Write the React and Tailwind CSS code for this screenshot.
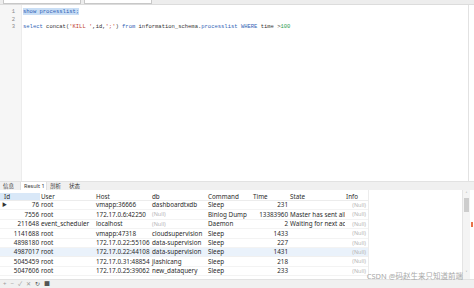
import React from "react";

const cols = [
  { key: "id", label: "Id", w: 40, right: true },
  { key: "user", label: "User", w: 55 },
  { key: "host", label: "Host", w: 56 },
  { key: "db", label: "db", w: 56 },
  { key: "cmd", label: "Command", w: 45 },
  { key: "time", label: "Time", w: 37, right: true },
  { key: "state", label: "State", w: 56 },
  { key: "info", label: "Info", w: 23 },
];

const rows = [
  ["76", "root", "vmapp:36666", "dashboardtxdb", "Sleep", "231", "", null],
  ["7556", "root", "172.17.0.6:42250", null, "Binlog Dump", "13383960", "Master has sent all b", null],
  ["211648", "event_scheduler", "localhost", null, "Daemon", "2", "Waiting for next acti", null],
  ["1141688", "root", "vmapp:47318", "cloudsupervision", "Sleep", "1433", "", null],
  ["4898180", "root", "172.17.0.22:55106", "data-supervision", "Sleep", "227", "", null],
  ["4987017", "root", "172.17.0.22:44108", "data-supervision", "Sleep", "1431", "", null],
  ["5045459", "root", "172.17.0.31:48854", "jiashicang", "Sleep", "218", "", null],
  ["5047606", "root", "172.17.0.25:39062", "new_dataquery", "Sleep", "233", "", null],
];

const ui = { fontFamily: '"Noto Sans", "Open Sans", "Noto Sans CJK SC", sans-serif' };
const mono = { fontFamily: '"Liberation Mono", "DejaVu Sans Mono", monospace' };

export default function App() {
  return (
    <div className="relative w-[474px] h-[288px] overflow-hidden bg-white flex flex-col" style={ui}>
      {/* top toolbar strip */}
      <div className="h-[5px] bg-[#ededed] border-b border-[#dcdcdc] flex items-end gap-[3px] px-[3px] shrink-0">
        <div className="w-[78px] h-[4px] bg-white border border-t-0 border-[#c8c8c8]" />
        <div className="w-[68px] h-[4px] bg-white border border-t-0 border-[#c8c8c8]" />
      </div>

      {/* editor */}
      <div className="flex h-[176px] shrink-0">
        <div className="w-[22px] bg-[#f6f6f6] border-r border-[#ececec] pt-[3px] text-[#8a8a8a] text-[5.5px] leading-[7.6px] text-right pr-[6px]" style={mono}>
          <div>1</div>
          <div>2</div>
          <div>3</div>
        </div>
        <div className="flex-1 pt-[3px] pl-[1px] text-[5.5px] leading-[7.6px] text-[#333]" style={mono}>
          <div>
            <span className="bg-[#c9def5] text-[#2f5fb5]">show processlist;</span>
          </div>
          <div>&nbsp;</div>
          <div className="whitespace-pre">
            <span className="text-[#2f5fb5]">select</span> concat(<span className="text-[#c0392b]">'KILL '</span>,id,<span className="text-[#c0392b]">';'</span>) <span className="text-[#2f5fb5]">from</span> information_schema.<span className="text-[#2f5fb5]">processlist</span> <span className="text-[#2f5fb5]">WHERE</span> time &gt;<span className="text-[#2e9e4f]">100</span>
          </div>
        </div>
        <div className="w-[6px] border-l border-[#e2e2e2] bg-white" />
      </div>

      {/* tab bar */}
      <div className="h-[9px] bg-[#f0f0f0] border-t border-[#e2e2e2] flex items-end text-[5.5px] text-[#333] shrink-0" style={ui}>
        <div className="w-[20px] pl-[3px] h-full flex items-center">信息</div>
        <div className="w-[27px] bg-white h-full flex items-center pl-[3px] border-x border-[#e0e0e0]">Result 1</div>
        <div className="w-[19px] h-full flex items-center pl-[3px]">剖析</div>
        <div className="w-[20px] h-full flex items-center pl-[3px]">状态</div>
      </div>

      {/* grid area */}
      <div className="flex h-[89px] shrink-0 bg-white">
        <div className="w-[368px] pt-[3px] text-[6.3px] text-[#2b2b2b]">
          <div className="flex h-[8px] items-center border-b border-[#ececec]">
            {cols.map((c, i) => (
              <div
                key={c.key}
                className={i === 0 ? "h-full flex items-center pl-[4px] bg-[#d9e8f8]" : "h-full flex items-center pl-[1px]"}
                style={{ width: c.w }}
              >
                {c.label}
              </div>
            ))}
          </div>
          {rows.map((r, ri) => (
            <div
              key={ri}
              className={ri === 5 ? "flex h-[9.4px] items-center bg-[#eaf2fb] border-b border-[#f0f0f0]" : "flex h-[9.4px] items-center border-b border-[#f3f3f3]"}
            >
              {r.map((v, ci) => {
                const c = cols[ci];
                const isNull = v === null;
                return (
                  <div
                    key={ci}
                    className={
                      "relative h-full flex items-center whitespace-nowrap overflow-hidden " +
                      (c.right ? "justify-end pr-[1px] " : "pl-[1px] ") +
                      (isNull ? "text-[#b4b4b4] text-[5.5px]" : "")
                    }
                    style={{ width: c.w }}
                  >
                    {ci === 0 && ri === 0 && (
                      <span className="absolute left-[2px] text-[5px] text-[#333]">▶</span>
                    )}
                    {isNull ? (ci === 7 ? <span className="ml-auto pr-[2px]">(Null)</span> : "(Null)") : v}
                  </div>
                );
              })}
            </div>
          ))}
        </div>
        <div className="flex-1 border-l border-[#ececec]" />
        <div className="w-[8px] bg-[#f4f4f4] border-l border-[#e4e4e4] flex flex-col items-center pt-[1px] text-[5px] text-[#777]">
          <div className="leading-[6px]">˄</div>
          <div className="w-[5px] h-[14px] bg-[#cdcdcd] mt-[1px]" />
          <div className="flex-1" />
          <div className="leading-[6px] mb-[3px]">˅</div>
        </div>
        <div className="w-[4px] relative">
          <div className="absolute top-[32px] left-[1px] w-[2px] h-[5px] bg-[#e8734a]" />
        </div>
      </div>

      {/* bottom toolbar */}
      <div className="h-[9px] bg-[#f0f0f0] border-t border-[#e2e2e2] flex items-center gap-[4px] pl-[3px] text-[6px] text-[#9a9a9a] shrink-0" style={ui}>
        <span>+</span>
        <span>−</span>
        <span>✓</span>
        <span>✕</span>
        <span className="text-[#555]">↻</span>
        <span className="text-[#555]">■</span>
      </div>

      {/* watermark */}
      <div className="absolute right-[11px] bottom-[6px] text-[7.5px] text-[#a8a8a8]" style={{ fontFamily: '"Noto Sans", "Noto Sans CJK SC", sans-serif' }}>
        CSDN @码赵生来只知道前端
      </div>
    </div>
  );
}
